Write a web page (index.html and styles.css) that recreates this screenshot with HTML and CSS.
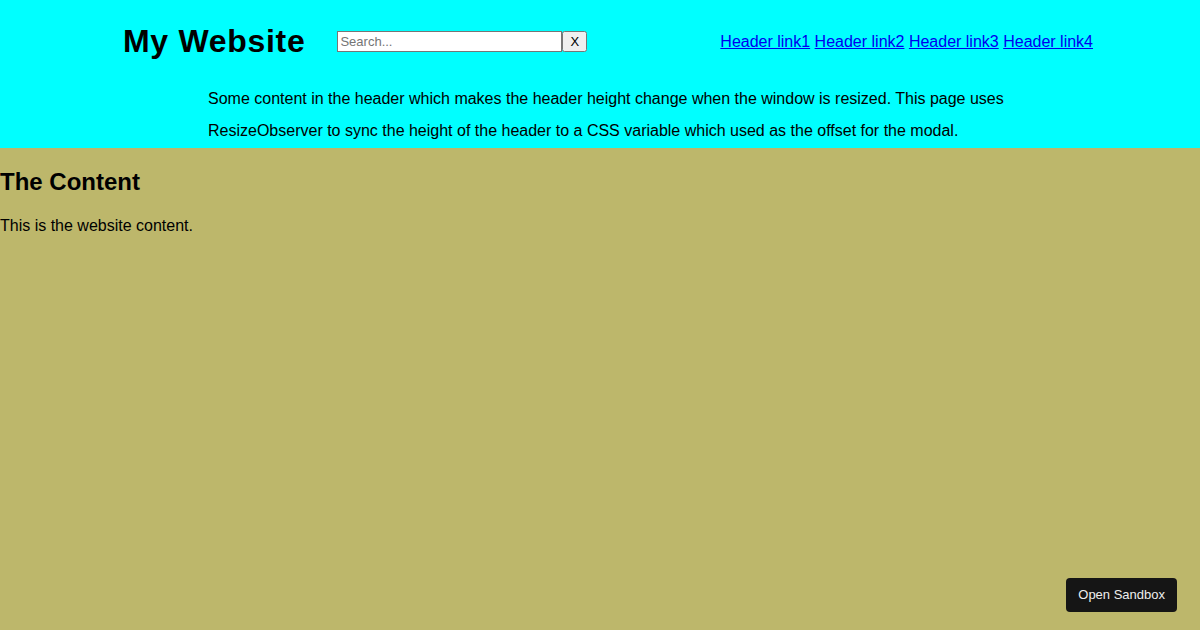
FILE: index.html
```html
<!DOCTYPE html>
<html lang="en">
<head>
  <meta charset="UTF-8">
  <title>My Website</title>
  <link rel="stylesheet" href="styles.css">
</head>
<body>
  <header class="site-header">
    <div class="header-top">
      <h1 class="logo">My Website</h1>
      <form class="search">
        <input type="text" placeholder="Search..."><button type="button">X</button>
      </form>
      <nav class="header-links">
        <a href="#">Header link1</a>
        <a href="#">Header link2</a>
        <a href="#">Header link3</a>
        <a href="#">Header link4</a>
      </nav>
    </div>
    <p class="header-note">Some content in the header which makes the header height change when the window is resized. This page uses ResizeObserver to sync the height of the header to a CSS variable which used as the offset for the modal.</p>
  </header>

  <main class="content">
    <h2>The Content</h2>
    <p>This is the website content.</p>
  </main>

  <a class="sandbox-btn" href="#">Open Sandbox</a>
</body>
</html>
```

FILE: styles.css
```css
/* Base */
body {
  margin: 0;
  min-height: 100vh;
  background-color: darkkhaki;
  font-family: "Liberation Sans", Arial, sans-serif;
  font-size: 16px;
  color: #000;
}

/* Header */
.site-header {
  background-color: aqua;
}
.header-top {
  display: flex;
  align-items: center;
  height: 83px;
  padding: 0 107px 0 123px;
}
.logo {
  margin: 0 32px 0 0;
  font-size: 32px;
  letter-spacing: 0.7px;
}
.search {
  display: flex;
  margin: 0;
}
.search input {
  width: 225px;
  height: 21px;
  box-sizing: border-box;
  font-family: "Liberation Sans", Arial, sans-serif;
  font-size: 13px;
  padding: 1px 2px;
  border: 1px solid #767676;
}
.search button {
  height: 21px;
  box-sizing: border-box;
  font-family: "Liberation Sans", Arial, sans-serif;
  font-size: 13px;
  padding: 1px 6px;
}
.header-links {
  margin-left: auto;
}
.header-links a {
  color: #0000ee;
}
.header-note {
  margin: 0 0 0 208px;
  padding-bottom: 1px;
  max-width: 820px;
  line-height: 32px;
}

/* Content */
.content h2 {
  font-size: 24px;
  margin: 20px 0 21px;
}

/* Floating button */
.sandbox-btn {
  position: fixed;
  right: 23px;
  bottom: 18px;
  padding: 9px 12px 10px;
  background-color: #151515;
  color: #eee;
  font-size: 13px;
  border-radius: 4px;
  text-decoration: none;
}
```
